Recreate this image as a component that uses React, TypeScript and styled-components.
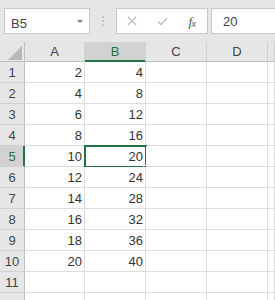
import styled, { createGlobalStyle } from "styled-components";

const GlobalStyle = createGlobalStyle`
  html, body {
    margin: 0;
    padding: 0;
  }
  body {
    background: #ffffff;
    font-family: "Liberation Sans", Arial, sans-serif;
    overflow: hidden;
  }
`;

const GREEN = "#217346";

const Window = styled.div`
  width: 275px;
  height: 300px;
  overflow: hidden;
  display: flex;
  flex-direction: column;
`;

const FormulaBar = styled.div`
  height: 42px;
  flex-shrink: 0;
  box-sizing: border-box;
  padding: 8px 0 0 4px;
  background: #e6e6e6;
  display: flex;
  align-items: flex-start;
`;

const NameBox = styled.div`
  width: 86px;
  height: 26px;
  box-sizing: border-box;
  background: #fff;
  border: 1px solid #c8c8c8;
  padding: 4px 6px 0 6px;
  display: flex;
  align-items: center;
  justify-content: space-between;
  font-size: 13px;
  color: #444;
`;

const Caret = styled.span`
  width: 0;
  height: 0;
  border-left: 3px solid transparent;
  border-right: 3px solid transparent;
  border-top: 3px solid #7a7a7a;
  margin-top: -4px;
`;

const Grip = styled.div`
  width: 26px;
  height: 26px;
  display: flex;
  align-items: center;
  justify-content: center;
`;

const ButtonGroup = styled.div`
  width: 92px;
  height: 26px;
  box-sizing: border-box;
  background: #fff;
  border: 1px solid #c8c8c8;
  display: flex;
`;

const BarButton = styled.div`
  width: 30px;
  height: 24px;
  display: flex;
  align-items: center;
  justify-content: center;
`;

const Fx = styled.span`
  font-family: "Liberation Serif", "Times New Roman", serif;
  font-style: italic;
  font-size: 13px;
  color: #555;
  letter-spacing: -0.5px;
  margin-top: 1px;

  sub {
    font-size: 10px;
    vertical-align: -1px;
  }
`;

const FormulaInput = styled.div`
  flex: 1;
  height: 26px;
  margin-left: 3px;
  box-sizing: border-box;
  background: #fff;
  border: 1px solid #c8c8c8;
  border-right: none;
  padding-left: 11px;
  display: flex;
  align-items: center;
  font-size: 13px;
  color: #444;
`;

const Grid = styled.div`
  display: grid;
  grid-template-columns: 25px 60px 61px 61px 61px 1fr;
  grid-template-rows: 20px;
  grid-auto-rows: 21px;
  font-size: 13px;
`;

const Corner = styled.div`
  box-sizing: border-box;
  background: #e6e6e6;
  border-right: 1px solid #bfbfbf;
  border-bottom: 1px solid #bfbfbf;
  display: flex;
  align-items: flex-end;
  justify-content: flex-end;
  padding: 0 2px 1px 0;
`;

const ColHeader = styled.div<{ $active?: boolean }>`
  box-sizing: border-box;
  background: ${(p) => (p.$active ? "#d2d2d2" : "#e6e6e6")};
  color: ${(p) => (p.$active ? GREEN : "#444")};
  border-right: 1px solid #d0d0d0;
  border-bottom: 1px solid ${(p) => (p.$active ? GREEN : "#bfbfbf")};
  box-shadow: ${(p) => (p.$active ? `inset 0 -1px 0 ${GREEN}` : "none")};
  text-align: center;
  line-height: 19px;
`;

const RowHeader = styled.div<{ $active?: boolean }>`
  box-sizing: border-box;
  background: ${(p) => (p.$active ? "#d2d2d2" : "#e6e6e6")};
  color: ${(p) => (p.$active ? GREEN : "#444")};
  border-right: 1px solid ${(p) => (p.$active ? GREEN : "#bfbfbf")};
  border-bottom: 1px solid #d0d0d0;
  box-shadow: ${(p) => (p.$active ? `inset -1px 0 0 ${GREEN}` : "none")};
  text-align: center;
  line-height: 22px;
`;

const Cell = styled.div`
  position: relative;
  box-sizing: border-box;
  background: #fff;
  color: #333;
  border-right: 1px solid #dcdcdc;
  border-bottom: 1px solid #dcdcdc;
  text-align: right;
  padding-right: 2px;
  line-height: 22px;
`;

const Selection = styled.div`
  position: absolute;
  top: -1px;
  left: -1px;
  right: -2px;
  bottom: -2px;
  border: 2px solid ${GREEN};
  pointer-events: none;
`;

const FillHandle = styled.div`
  position: absolute;
  right: -4px;
  bottom: -5px;
  width: 5px;
  height: 5px;
  background: ${GREEN};
  outline: 1px solid #fff;
`;

const columns = ["A", "B", "C", "D", ""];
const activeCol = 1;
const activeRow = 5;

// 11 numbered rows, plus the top sliver of row 12 at the bottom edge
const rows = Array.from({ length: 12 }, (_, i) => {
  const n = i + 1;
  return n <= 10 ? [String(n * 2), String(n * 4), "", "", ""] : ["", "", "", "", ""];
});

export default function App() {
  return (
    <Window>
      <GlobalStyle />
      <FormulaBar>
        <NameBox>
          <span>B5</span>
          <Caret />
        </NameBox>
        <Grip>
          <svg width="2" height="10" viewBox="0 0 2 10">
            <rect x="0" y="0" width="2" height="2" fill="#c4c4c4" />
            <rect x="0" y="4" width="2" height="2" fill="#c4c4c4" />
            <rect x="0" y="8" width="2" height="2" fill="#c4c4c4" />
          </svg>
        </Grip>
        <ButtonGroup>
          <BarButton>
            <svg width="10" height="10" viewBox="0 0 10 10">
              <path d="M1 1 L9 9 M9 1 L1 9" stroke="#bdbdbd" strokeWidth="1.2" fill="none" />
            </svg>
          </BarButton>
          <BarButton>
            <svg width="11" height="9" viewBox="0 0 11 9">
              <path d="M1 4.5 L4 7.5 L10 1" stroke="#bdbdbd" strokeWidth="1.3" fill="none" />
            </svg>
          </BarButton>
          <BarButton>
            <Fx>
              f<sub>x</sub>
            </Fx>
          </BarButton>
        </ButtonGroup>
        <FormulaInput>20</FormulaInput>
      </FormulaBar>

      <Grid>
        <Corner>
          <svg width="14" height="14" viewBox="0 0 14 14">
            <polygon points="14,0 14,14 0,14" fill="#b8b8b8" />
          </svg>
        </Corner>
        {columns.map((c, i) => (
          <ColHeader key={i} $active={i === activeCol}>
            {c}
          </ColHeader>
        ))}
        {rows.map((vals, r) => (
          <Row key={r} index={r + 1} vals={vals} />
        ))}
      </Grid>
    </Window>
  );
}

function Row({ index, vals }: { index: number; vals: string[] }) {
  return (
    <>
      <RowHeader $active={index === activeRow}>{index <= 11 ? index : ""}</RowHeader>
      {vals.map((v, c) => (
        <Cell key={c}>
          {v}
          {index === activeRow && c === activeCol && (
            <Selection>
              <FillHandle />
            </Selection>
          )}
        </Cell>
      ))}
    </>
  );
}
